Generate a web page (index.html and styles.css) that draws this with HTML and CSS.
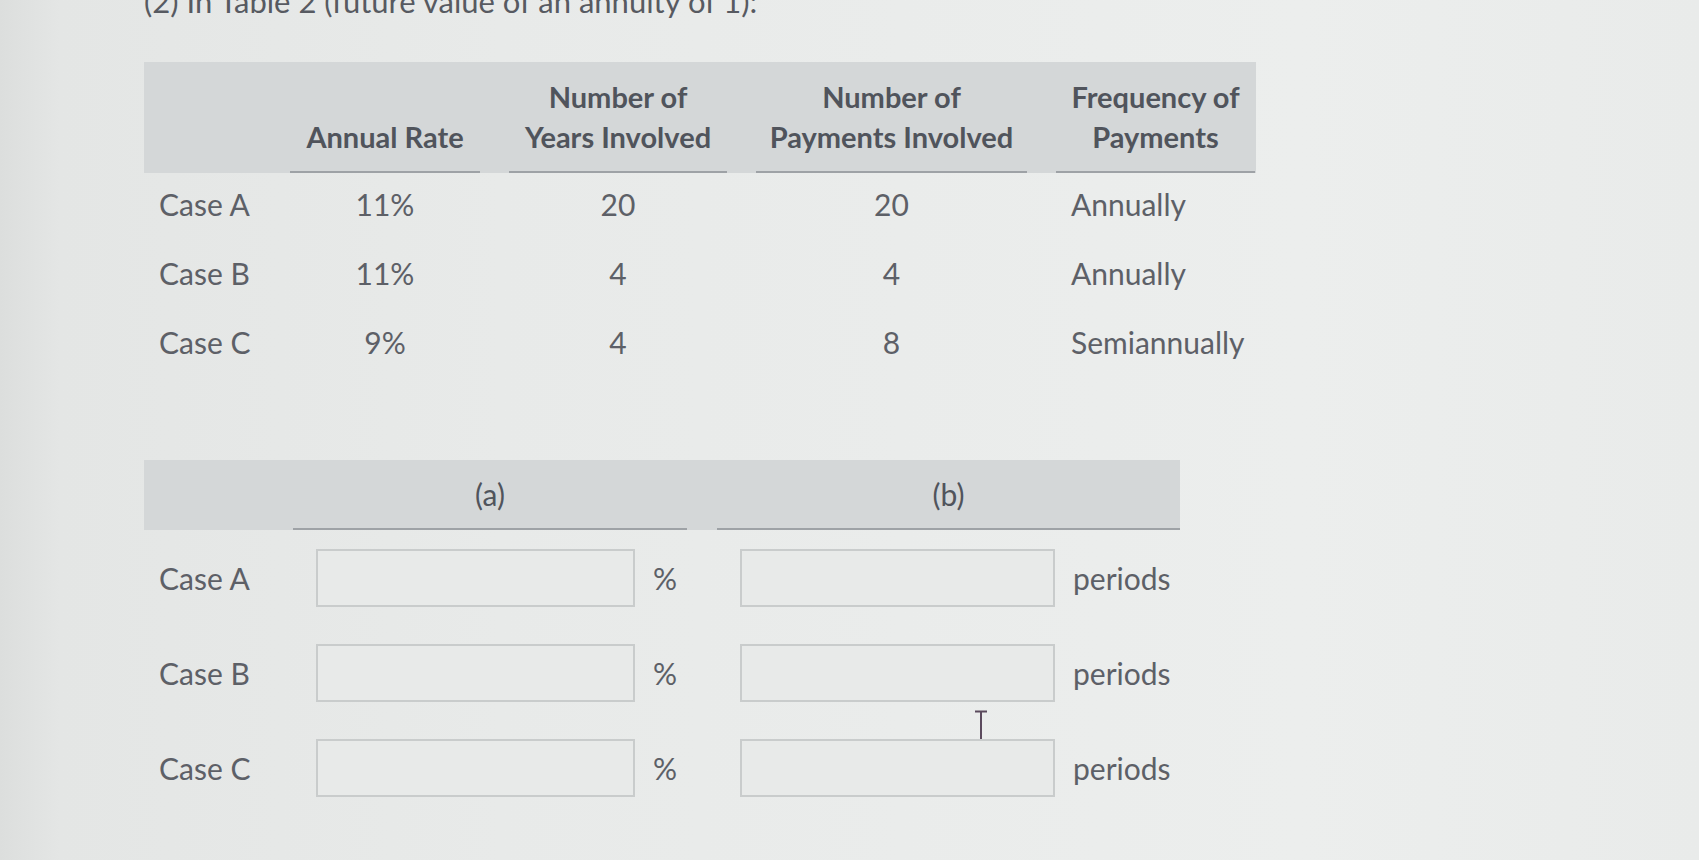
FILE: index.html
```html
<!DOCTYPE html>
<html>
<head>
<meta charset="utf-8">
<link rel="stylesheet" href="styles.css">
</head>
<body>
<div class="page">
  <p class="intro">(2) In Table 2 (future value of an annuity of 1):</p>

  <section class="t1">
    <div class="band cols1">
      <div class="hc"></div>
      <div class="hc line">Annual Rate</div>
      <div class="hc line">Number of<br>Years Involved</div>
      <div class="hc line">Number of<br>Payments Involved</div>
      <div class="hc line">Frequency of<br>Payments</div>
    </div>
    <div class="rows cols1">
      <div class="c lab">Case A</div><div class="c mid">11%</div><div class="c mid">20</div><div class="c mid">20</div><div class="c left">Annually</div>
      <div class="c lab">Case B</div><div class="c mid">11%</div><div class="c mid">4</div><div class="c mid">4</div><div class="c left">Annually</div>
      <div class="c lab">Case C</div><div class="c mid">9%</div><div class="c mid">4</div><div class="c mid">8</div><div class="c left">Semiannually</div>
    </div>
  </section>

  <section class="t2">
    <div class="band cols2">
      <div class="hc"></div>
      <div class="hc line">(a)</div>
      <div class="hc line">(b)</div>
    </div>
    <div class="rows cols2">
      <div class="c lab">Case A</div>
      <div class="c field"><span class="box"></span><span class="unit">%</span></div>
      <div class="c field"><span class="box"></span><span class="unit">periods</span></div>

      <div class="c lab">Case B</div>
      <div class="c field"><span class="box"></span><span class="unit">%</span></div>
      <div class="c field"><span class="box"></span><span class="unit">periods</span>
        <svg class="cursor" width="16" height="32" viewBox="0 0 16 32"><path d="M2 1.5h12M8 1.5v29M2 30.5h12" stroke="#5b4a5d" stroke-width="2" fill="none"/></svg>
      </div>

      <div class="c lab">Case C</div>
      <div class="c field"><span class="box"></span><span class="unit">%</span></div>
      <div class="c field"><span class="box"></span><span class="unit">periods</span></div>
    </div>
  </section>
</div>
</body>
</html>
```

FILE: styles.css
```css
html, body {
  margin: 0;
  padding: 0;
}
body {
  width: 1699px;
  height: 860px;
  overflow: hidden;
  background: linear-gradient(90deg, #dcdedd 0px, #e4e6e5 60px, #e8eae9 500px, #eceeed 1300px, #e9ebea 1699px);
  font-family: Lato, "Open Sans", sans-serif;
  color: #5d6067;
}
.page {
  padding-left: 144px;
}
.intro {
  margin: -19px 0 0 0;
  font-size: 31px;
  line-height: 40px;
  color: #575a61;
}
.cols1 {
  display: grid;
  width: 1112px;
  grid-template-columns: 117px 190px 218px 271px 199px;
  column-gap: 29px;
}
.cols2 {
  display: grid;
  width: 1036px;
  grid-template-columns: 119px 394px 463px;
  column-gap: 30px;
}
.t1 {
  margin-top: 41px;
}
.t2 {
  margin-top: 80px;
}
.band {
  background: #d4d7d8;
}
.hc {
  font-weight: 700;
  font-size: 29px;
  line-height: 40px;
  color: #50545c;
  text-align: center;
  display: flex;
  justify-content: center;
  border-bottom: 2px solid transparent;
}
.hc.line {
  border-bottom-color: #9ea2a6;
}
.t1 .hc {
  height: 111px;
  box-sizing: border-box;
  align-items: flex-end;
  padding-bottom: 14px;
}
.t2 .hc {
  height: 70px;
  box-sizing: border-box;
  align-items: center;
  font-weight: 400;
  font-size: 30px;
}
.c {
  font-size: 30px;
  line-height: 40px;
  display: flex;
  align-items: center;
}
.t1 .c {
  height: 69px;
  box-sizing: border-box;
  padding-bottom: 7px;
}
.lab {
  padding-left: 15px;
}
.t1 .left {
  padding-left: 15px;
}
.mid {
  justify-content: center;
}
.t2 .c {
  height: 95px;
}
.field {
  padding-left: 23px;
  position: relative;
}
.box {
  display: block;
  width: 319px;
  height: 58px;
  box-sizing: border-box;
  border: 2px solid #c9cccc;
  background: #e8eae9;
  flex: none;
}
.cols2 .field:nth-child(3n) .box {
  width: 315px;
}
.unit {
  margin-left: 18px;
}
.cursor {
  position: absolute;
  left: 256px;
  top: 85px;
}
```
